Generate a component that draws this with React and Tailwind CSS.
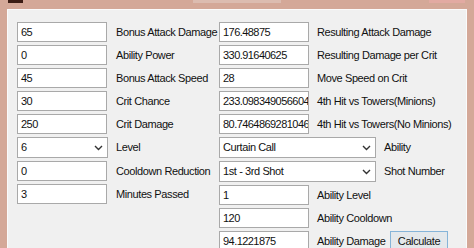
import React from "react";

const Box = ({ children, w = "w-[90px]" }) => (
  <div className={`${w} h-[20px] shrink-0 bg-white border border-[#a9a9a9] pl-[3px] flex items-center overflow-hidden whitespace-nowrap tracking-[-0.55px]`}>
    {children}
  </div>
);

const Chevron = () => (
  <svg width="9" height="6" viewBox="0 0 9 6" className="shrink-0">
    <path d="M1 1 L4.5 4.5 L8 1" fill="none" stroke="#333" strokeWidth="1.4" />
  </svg>
);

const Combo = ({ children, w }) => (
  <div className={`${w} h-[21px] shrink-0 bg-white border border-[#a9a9a9] pl-[3px] pr-[4px] flex items-center justify-between overflow-hidden whitespace-nowrap`}>
    <span>{children}</span>
    <Chevron />
  </div>
);

const Row = ({ children, h = "h-[20px]" }) => (
  <div className={`${h} flex items-center whitespace-nowrap`}>{children}</div>
);

export default function App() {
  return (
    <div
      className="w-[474px] h-[248px] bg-[#d4a898] flex flex-col overflow-hidden text-[11px] tracking-[-0.4px] text-[#111]"
      style={{ fontFamily: '"Liberation Sans", Arial, sans-serif' }}
    >
      <div className="h-[9px] shrink-0 flex items-start">
        <div className="ml-[8px] w-[15px] h-[3px] bg-[#3b1c14]" />
        <div className="ml-[170px] w-[88px] h-[3px] bg-[#dcbcb0]" />
        <div className="ml-auto mr-[9px] w-[36px] h-[3px] bg-[#e2aaa2]" />
      </div>
      <div className="flex-1 mx-[7px] bg-[#f0f0f0] border-t border-l border-r border-[#fbfbfb] pt-[12px] pl-[9px] flex">
        <div className="flex flex-col gap-[3px] w-[202px] shrink-0">
          <Row><Box>65</Box><span className="ml-[9px]">Bonus Attack Damage</span></Row>
          <Row><Box>0</Box><span className="ml-[9px]">Ability Power</span></Row>
          <Row><Box>45</Box><span className="ml-[9px]">Bonus Attack Speed</span></Row>
          <Row><Box>30</Box><span className="ml-[9px]">Crit Chance</span></Row>
          <Row><Box>250</Box><span className="ml-[9px]">Crit Damage</span></Row>
          <Row h="h-[21px]"><Combo w="w-[91px]">6</Combo><span className="ml-[8px]">Level</span></Row>
          <Row><Box>0</Box><span className="ml-[9px]">Cooldown Reduction</span></Row>
          <Row><Box>3</Box><span className="ml-[9px]">Minutes Passed</span></Row>
        </div>
        <div className="flex flex-col gap-[3px]">
          <Row><Box>176.48875</Box><span className="ml-[8px]">Resulting Attack Damage</span></Row>
          <Row><Box>330.91640625</Box><span className="ml-[8px]">Resulting Damage per Crit</span></Row>
          <Row><Box>28</Box><span className="ml-[8px]">Move Speed on Crit</span></Row>
          <Row><Box>233.098349056604</Box><span className="ml-[8px]">4th Hit vs Towers(Minions)</span></Row>
          <Row><Box>80.7464869281046</Box><span className="ml-[8px]">4th Hit vs Towers(No Minions)</span></Row>
          <Row h="h-[21px]"><Combo w="w-[157px]">Curtain Call</Combo><span className="ml-[8px]">Ability</span></Row>
          <Row h="h-[21px]"><Combo w="w-[157px]">1st - 3rd Shot</Combo><span className="ml-[8px]">Shot Number</span></Row>
          <Row><Box>1</Box><span className="ml-[8px]">Ability Level</span></Row>
          <Row><Box>120</Box><span className="ml-[8px]">Ability Cooldown</span></Row>
          <Row>
            <Box>94.1221875</Box>
            <span className="ml-[8px] w-[73px] shrink-0">Ability Damage</span>
            <div className="w-[58px] h-[20px] shrink-0 border border-[#86b4d8] bg-[#e4e8eb] flex items-center justify-center">
              Calculate
            </div>
          </Row>
        </div>
      </div>
    </div>
  );
}
